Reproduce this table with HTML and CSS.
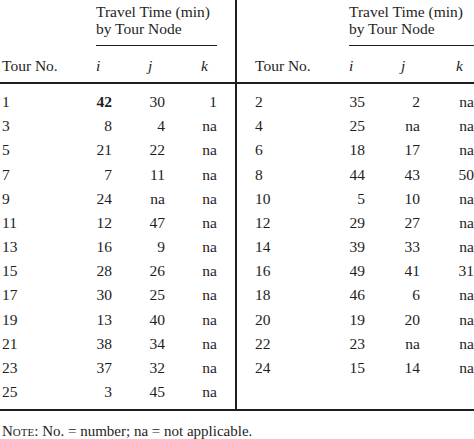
FILE: index.html
```html
<!DOCTYPE html>
<html lang="en">
<head>
<meta charset="utf-8">
<title>Travel Time by Tour Node</title>
<link rel="stylesheet" href="styles.css">
</head>
<body>
<div class="table">
  <div class="head">
    <div class="half left">
      <div class="grid grid-left hgrid">
        <div class="group">Travel Time (min)<br>by Tour Node</div>
        <div class="lab tour">Tour No.</div>
        <div class="lab"><i>i</i></div>
        <div class="lab"><i>j</i></div>
        <div class="lab"><i>k</i></div>
      </div>
    </div>
    <div class="half right">
      <div class="grid grid-right hgrid">
        <div class="group">Travel Time (min)<br>by Tour Node</div>
        <div class="lab tour">Tour No.</div>
        <div class="lab"><i>i</i></div>
        <div class="lab"><i>j</i></div>
        <div class="lab"><i>k</i></div>
      </div>
    </div>
  </div>
  <div class="body">
    <div class="half left">
      <div class="grid grid-left bgrid">
        <div class="t">1</div><div class="n b">42</div><div class="n">30</div><div class="n">1</div>
        <div class="t">3</div><div class="n">8</div><div class="n">4</div><div class="n">na</div>
        <div class="t">5</div><div class="n">21</div><div class="n">22</div><div class="n">na</div>
        <div class="t">7</div><div class="n">7</div><div class="n">11</div><div class="n">na</div>
        <div class="t">9</div><div class="n">24</div><div class="n">na</div><div class="n">na</div>
        <div class="t">11</div><div class="n">12</div><div class="n">47</div><div class="n">na</div>
        <div class="t">13</div><div class="n">16</div><div class="n">9</div><div class="n">na</div>
        <div class="t">15</div><div class="n">28</div><div class="n">26</div><div class="n">na</div>
        <div class="t">17</div><div class="n">30</div><div class="n">25</div><div class="n">na</div>
        <div class="t">19</div><div class="n">13</div><div class="n">40</div><div class="n">na</div>
        <div class="t">21</div><div class="n">38</div><div class="n">34</div><div class="n">na</div>
        <div class="t">23</div><div class="n">37</div><div class="n">32</div><div class="n">na</div>
        <div class="t">25</div><div class="n">3</div><div class="n">45</div><div class="n">na</div>
      </div>
    </div>
    <div class="half right">
      <div class="grid grid-right bgrid">
        <div class="t">2</div><div class="n">35</div><div class="n">2</div><div class="n">na</div>
        <div class="t">4</div><div class="n">25</div><div class="n">na</div><div class="n">na</div>
        <div class="t">6</div><div class="n">18</div><div class="n">17</div><div class="n">na</div>
        <div class="t">8</div><div class="n">44</div><div class="n">43</div><div class="n">50</div>
        <div class="t">10</div><div class="n">5</div><div class="n">10</div><div class="n">na</div>
        <div class="t">12</div><div class="n">29</div><div class="n">27</div><div class="n">na</div>
        <div class="t">14</div><div class="n">39</div><div class="n">33</div><div class="n">na</div>
        <div class="t">16</div><div class="n">49</div><div class="n">41</div><div class="n">31</div>
        <div class="t">18</div><div class="n">46</div><div class="n">6</div><div class="n">na</div>
        <div class="t">20</div><div class="n">19</div><div class="n">20</div><div class="n">na</div>
        <div class="t">22</div><div class="n">23</div><div class="n">na</div><div class="n">na</div>
        <div class="t">24</div><div class="n">15</div><div class="n">14</div><div class="n">na</div>
      </div>
    </div>
  </div>
</div>
<p class="note"><span class="sc">Note</span>: No. = number; na = not applicable.</p>
</body>
</html>
```

FILE: styles.css
```css
html, body {
  margin: 0;
  padding: 0;
  background: #ffffff;
  overflow: hidden;
}

body {
  font-family: "Liberation Serif", "Times New Roman", serif;
  font-size: 15.5px;
  color: #1e1e1e;
  width: 474px;
  height: 439px;
}

.table {
  width: 500px;
  border-bottom: 2px solid #1e1e1e;
}

.head,
.body {
  display: flex;
}

.head {
  border-bottom: 2px solid #1e1e1e;
}

.half.left {
  width: 233px;
  padding-left: 2px;
  border-right: 2px solid #1e1e1e;
  flex: none;
}

.half.right {
  padding-left: 18px;
  flex: 1;
}

.grid {
  display: grid;
  column-gap: 36px;
}

.grid-left {
  grid-template-columns: 58px 16px 17px 16px;
}

.grid-right {
  grid-template-columns: 58px 16px 19px 18px;
}

.hgrid {
  padding-top: 3px;
  padding-bottom: 8px;
  line-height: 17px;
}

.group {
  grid-column: 2 / 5;
  grid-row: 1;
  white-space: nowrap;
  padding-bottom: 8px;
  border-bottom: 1px solid #1e1e1e;
}

.lab {
  grid-row: 2;
  margin-top: 11px;
  white-space: nowrap;
}

.lab.tour {
  grid-column: 1;
}

.bgrid {
  padding-top: 6px;
  padding-bottom: 5px;
  line-height: 24.17px;
}

.n {
  text-align: right;
  white-space: nowrap;
}

.t {
  white-space: nowrap;
}

.b {
  font-weight: bold;
}

.note {
  margin: 12px 0 0 2px;
  font-size: 15px;
  line-height: 17px;
  white-space: nowrap;
}

.sc {
  font-variant: small-caps;
}
```
